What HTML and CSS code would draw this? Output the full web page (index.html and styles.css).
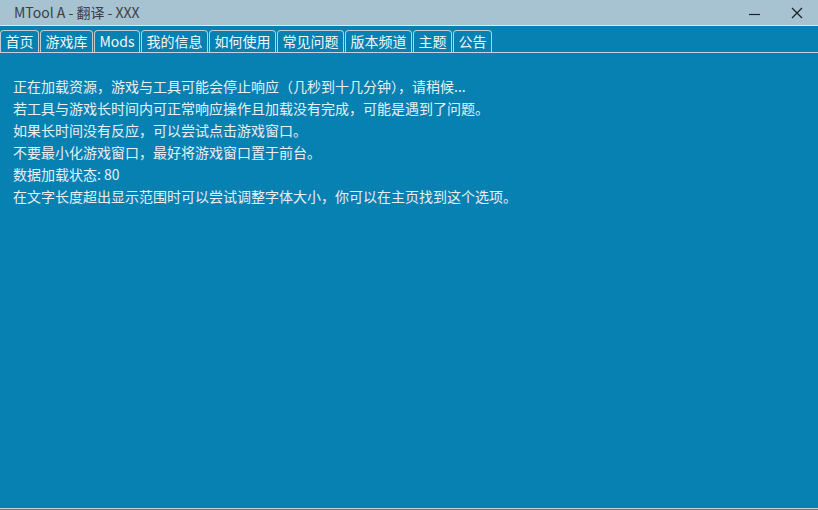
FILE: index.html
```html
<!DOCTYPE html>
<html lang="zh-CN">
<head>
<meta charset="utf-8">
<title>MTool A - 翻译 - XXX</title>
<link rel="stylesheet" href="styles.css">
</head>
<body>
<div class="window">
  <div class="titlebar">
    <span class="title">MTool A - 翻译 - XXX</span>
    <div class="controls">
      <span class="ctl">
        <svg width="12" height="12" viewBox="0 0 12 12"><line x1="0" y1="7.5" x2="11" y2="7.5" stroke="#222" stroke-width="1.2"/></svg>
      </span>
      <span class="ctl">
        <svg width="12" height="12" viewBox="0 0 12 12"><path d="M1 1 L11 11 M11 1 L1 11" stroke="#222" stroke-width="1.3" fill="none"/></svg>
      </span>
    </div>
  </div>
  <div class="tabs">
    <span class="tab">首页</span>
    <span class="tab">游戏库</span>
    <span class="tab">Mods</span>
    <span class="tab">我的信息</span>
    <span class="tab">如何使用</span>
    <span class="tab">常见问题</span>
    <span class="tab">版本频道</span>
    <span class="tab">主题</span>
    <span class="tab">公告</span>
  </div>
  <div class="content">
    <p>正在加载资源，游戏与工具可能会停止响应（几秒到十几分钟），请稍候...</p>
    <p>若工具与游戏长时间内可正常响应操作且加载没有完成，可能是遇到了问题。</p>
    <p>如果长时间没有反应，可以尝试点击游戏窗口。</p>
    <p>不要最小化游戏窗口，最好将游戏窗口置于前台。</p>
    <p>数据加载状态: 80</p>
    <p>在文字长度超出显示范围时可以尝试调整字体大小，你可以在主页找到这个选项。</p>
  </div>
</div>
</body>
</html>
```
FILE: styles.css
```css
html, body {
  margin: 0;
  padding: 0;
}
body {
  width: 818px;
  height: 510px;
  overflow: hidden;
  background: #0780b2;
  font-family: "Noto Sans CJK SC", "Noto Sans", sans-serif;
}
.window {
  display: flex;
  flex-direction: column;
  height: 510px;
  box-sizing: border-box;
  border-bottom: 1px solid #6b7479;
}
.titlebar {
  height: 26px;
  box-sizing: border-box;
  background: #a7c2d1;
  border-bottom: 1px solid #dfe7ec;
  display: flex;
  align-items: center;
  justify-content: space-between;
  padding-left: 14px;
}
.title {
  font-size: 14px;
  color: #3a4046;
  line-height: 1;
  margin-top: -2px;
}
.controls {
  display: flex;
  height: 100%;
}
.ctl {
  width: 42px;
  display: flex;
  align-items: center;
  justify-content: center;
}
.tabs {
  display: flex;
  gap: 1px;
  padding-top: 4px;
  border-bottom: 1px solid #c7d1d7;
  height: 27px;
  box-sizing: border-box;
  align-items: flex-end;
}
.tab {
  height: 22px;
  box-sizing: border-box;
  border: 1px solid #c2cbd1;
  border-bottom: none;
  border-radius: 4px 4px 0 0;
  padding: 0 4.5px;
  color: #f2f6f8;
  font-size: 14px;
  line-height: 21px;
  white-space: nowrap;
}
.content {
  flex: 1;
  padding: 22px 13px;
  border-bottom: 1px solid #c7d1d7;
}
.content p {
  margin: 0;
  font-size: 14px;
  line-height: 22px;
  color: #e9f0f4;
  white-space: nowrap;
}
```
